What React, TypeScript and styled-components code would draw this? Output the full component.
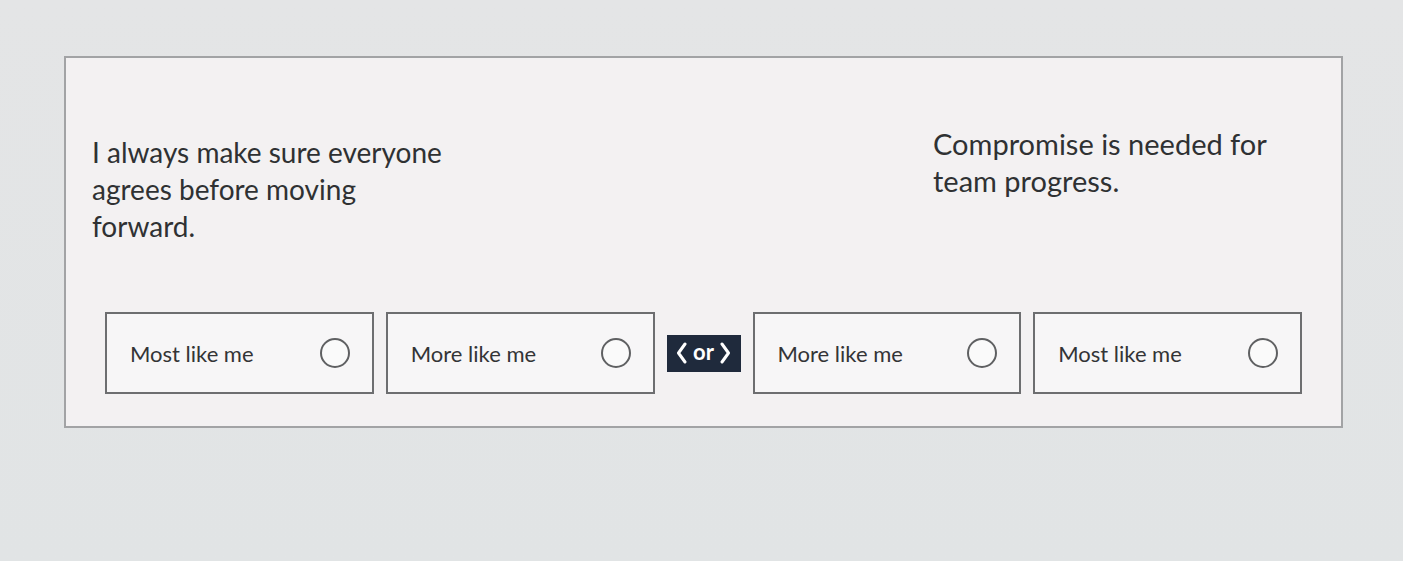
import React from "react";
import styled, { createGlobalStyle } from "styled-components";

const Global = createGlobalStyle`
  html, body { margin: 0; padding: 0; }
  body {
    background: #e3e5e6;
    font-family: Lato, "Open Sans", Arial, sans-serif;
    color: #2f3133;
  }
`;

const Page = styled.div`
  width: 1403px;
  height: 561px;
  padding: 56px 0 0 64px;
  box-sizing: border-box;
  background: linear-gradient(180deg, #e4e5e6 0%, #e1e4e5 100%);
`;

const Card = styled.div`
  width: 1279px;
  box-sizing: border-box;
  background: #f3f1f2;
  border: 2px solid #a2a3a5;
  padding: 76px 26px 32px 26px;
  display: flex;
  flex-direction: column;
  gap: 67px;
`;

const Statements = styled.div`
  display: flex;
  justify-content: space-between;
  align-items: flex-start;
`;

const Statement = styled.p<{ $width: number; $shift: number; $size: number }>`
  margin: 0;
  margin-top: ${(p) => p.$shift}px;
  width: ${(p) => p.$width}px;
  font-size: ${(p) => p.$size}px;
  line-height: 37px;
  color: #2f3133;
`;

const Options = styled.div`
  display: flex;
  align-items: center;
  gap: 12px;
  margin: 0 13px;
`;

const Option = styled.label`
  flex: 1;
  height: 82px;
  box-sizing: border-box;
  border: 2px solid #6d6e70;
  background: #f7f6f7;
  display: flex;
  align-items: center;
  justify-content: space-between;
  padding: 0 22px 0 23px;
  font-size: 22px;
  color: #333436;
  cursor: pointer;
`;

const Radio = styled.span`
  width: 30px;
  height: 30px;
  box-sizing: border-box;
  border: 2px solid #5f6062;
  border-radius: 50%;
  background: #fafafa;
`;

const OrBadge = styled.div`
  flex: 0 0 74px;
  height: 37px;
  background: #1f2a3c;
  color: #ffffff;
  display: flex;
  align-items: center;
  justify-content: center;
  gap: 6px;
  font-size: 22px;
  font-weight: 700;
  padding-bottom: 3px;
  box-sizing: border-box;
`;

const Chevron = ({ dir }: { dir: "left" | "right" }) => (
  <svg width="11" height="22" viewBox="0 0 11 22" fill="none" style={{ marginTop: 3 }}>
    <path
      d={dir === "left" ? "M9 2 L2.5 11 L9 20" : "M2 2 L8.5 11 L2 20"}
      stroke="#ffffff"
      strokeWidth="3"
      strokeLinecap="round"
      strokeLinejoin="round"
    />
  </svg>
);

const choices = ["Most like me", "More like me"];

export default function App() {
  return (
    <>
      <Global />
      <Page>
        <Card>
          <Statements>
            <Statement $width={362} $shift={0} $size={28}>
              I always make sure everyone agrees before moving forward.
            </Statement>
            <Statement $width={382} $shift={-9} $size={29}>
              Compromise is needed for team progress.
            </Statement>
          </Statements>
          <Options>
            {choices.map((c) => (
              <Option key={"a" + c}>
                {c}
                <Radio />
              </Option>
            ))}
            <OrBadge>
              <Chevron dir="left" />
              or
              <Chevron dir="right" />
            </OrBadge>
            {[...choices].reverse().map((c) => (
              <Option key={"b" + c}>
                {c}
                <Radio />
              </Option>
            ))}
          </Options>
        </Card>
      </Page>
    </>
  );
}
